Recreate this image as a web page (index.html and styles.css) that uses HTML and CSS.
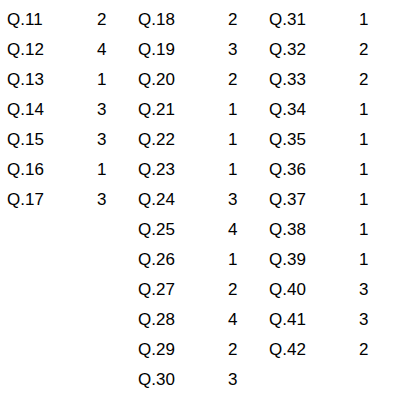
FILE: index.html
```html
<!DOCTYPE html>
<html>
<head>
<meta charset="utf-8">
<link rel="stylesheet" href="styles.css">
</head>
<body>
<div class="cols">
  <div class="group">
    <span class="q">Q.11</span><span class="a">2</span>
    <span class="q">Q.12</span><span class="a">4</span>
    <span class="q">Q.13</span><span class="a">1</span>
    <span class="q">Q.14</span><span class="a">3</span>
    <span class="q">Q.15</span><span class="a">3</span>
    <span class="q">Q.16</span><span class="a">1</span>
    <span class="q">Q.17</span><span class="a">3</span>
  </div>
  <div class="group">
    <span class="q">Q.18</span><span class="a">2</span>
    <span class="q">Q.19</span><span class="a">3</span>
    <span class="q">Q.20</span><span class="a">2</span>
    <span class="q">Q.21</span><span class="a">1</span>
    <span class="q">Q.22</span><span class="a">1</span>
    <span class="q">Q.23</span><span class="a">1</span>
    <span class="q">Q.24</span><span class="a">3</span>
    <span class="q">Q.25</span><span class="a">4</span>
    <span class="q">Q.26</span><span class="a">1</span>
    <span class="q">Q.27</span><span class="a">2</span>
    <span class="q">Q.28</span><span class="a">4</span>
    <span class="q">Q.29</span><span class="a">2</span>
    <span class="q">Q.30</span><span class="a">3</span>
  </div>
  <div class="group">
    <span class="q">Q.31</span><span class="a">1</span>
    <span class="q">Q.32</span><span class="a">2</span>
    <span class="q">Q.33</span><span class="a">2</span>
    <span class="q">Q.34</span><span class="a">1</span>
    <span class="q">Q.35</span><span class="a">1</span>
    <span class="q">Q.36</span><span class="a">1</span>
    <span class="q">Q.37</span><span class="a">1</span>
    <span class="q">Q.38</span><span class="a">1</span>
    <span class="q">Q.39</span><span class="a">1</span>
    <span class="q">Q.40</span><span class="a">3</span>
    <span class="q">Q.41</span><span class="a">3</span>
    <span class="q">Q.42</span><span class="a">2</span>
  </div>
</div>
</body>
</html>
```
FILE: styles.css
```css
html, body {
  margin: 0;
  background: #ffffff;
}
body {
  padding: 5px 0 0 7px;
  font-family: "Liberation Sans", Arial, sans-serif;
  font-size: 17px;
  line-height: 30px;
  color: #000000;
}
.cols {
  display: flex;
  align-items: flex-start;
}
.group {
  display: grid;
  grid-template-columns: 90px 41px;
  grid-auto-rows: 30px;
}
```
